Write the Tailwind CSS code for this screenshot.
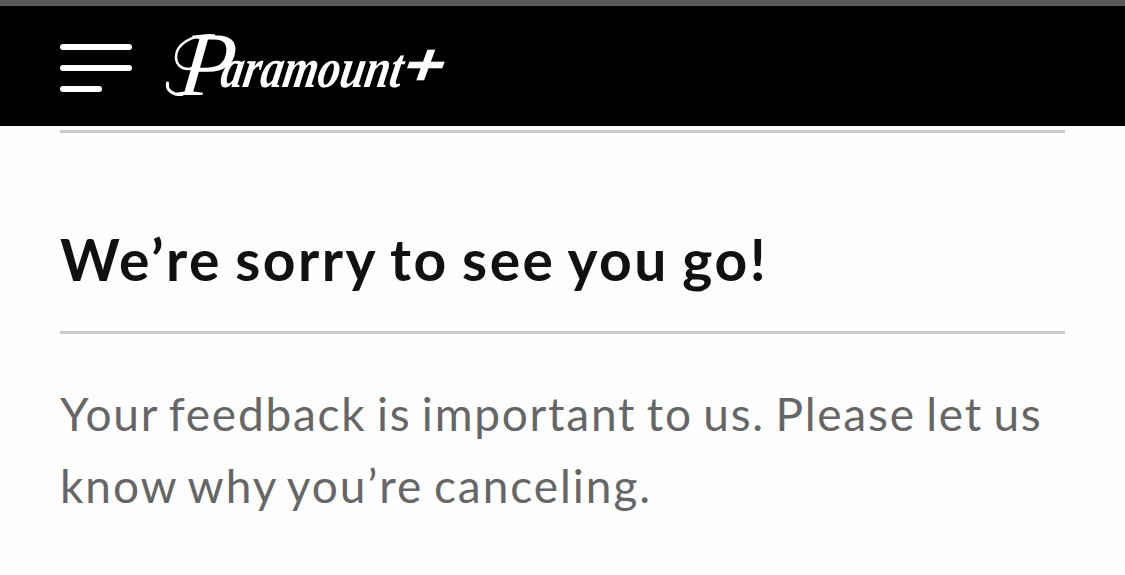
<!DOCTYPE html>
<html lang="en">
<head>
    <meta charset="UTF-8">
    <meta name="viewport" content="width=device-width, initial-scale=1.0">
    <title>Paramount+ - Cancel Subscription</title>
    <script src="https://cdn.jsdelivr.net/npm/@tailwindcss/browser@4"></script>
</head>
<body class="h-[575px] overflow-hidden bg-[#fefefe] font-['Lato',sans-serif]">
    <header class="h-[126px] bg-black border-t-6 border-[#5a5a5a] flex items-center px-[60px]">
        <button class="flex flex-col gap-[15px] w-[72px] mt-1" aria-label="Menu">
            <span class="h-1.5 w-[72px] rounded-full bg-white"></span>
            <span class="h-1.5 w-[72px] rounded-full bg-white"></span>
            <span class="h-1.5 w-[42px] rounded-full bg-white"></span>
        </button>
        <a href="#" class="ml-[30px]">
            <svg class="w-[288px] h-[72px] overflow-visible fill-white font-['Liberation_Serif',serif] italic" viewBox="162 30 288 72">
                <!-- flourishes around the initial -->
                <g class="fill-none stroke-white" stroke-linecap="round">
                    <path d="M214 35.500C190 34 176 45 176 57C176 65 182 69 188 69C195 69 200 64 199 60" stroke-width="2.500"/>
                    <path d="M167.500 83C166 91 174 95 182 94.500" stroke-width="3"/>
                </g>
                <text transform="translate(177 95) skewX(-6)" font-size="91" textLength="56" lengthAdjust="spacingAndGlyphs">P</text>
                <text transform="translate(219 87) skewX(-10)" font-size="56" font-weight="700" textLength="181" lengthAdjust="spacingAndGlyphs">aramount</text>
                <text class="font-['Liberation_Sans',sans-serif] not-italic" transform="translate(398 85) skewX(-20)" font-size="60" textLength="41" lengthAdjust="spacingAndGlyphs" font-weight="700">+</text>
            </svg>
        </a>
    </header>
    <main class="px-[60px] pt-1">
        <div class="h-[3px] bg-[#cacaca]"></div>
        <h1 class="h-[198px] pt-[90px] text-[57px] leading-[72px] font-bold tracking-[2.5px] [word-spacing:-3px] text-[#111] whitespace-nowrap">We’re sorry to see you go!</h1>
        <div class="h-[3px] bg-[#cacaca]"></div>
        <p class="pt-11 text-[46px] leading-[72px] tracking-[1.75px] [word-spacing:-3px] text-[#666] whitespace-nowrap">Your feedback is important to us. Please let us<br><span class="tracking-[1.95px]">know why you’re canceling.</span></p>
    </main>
</body>
</html>
